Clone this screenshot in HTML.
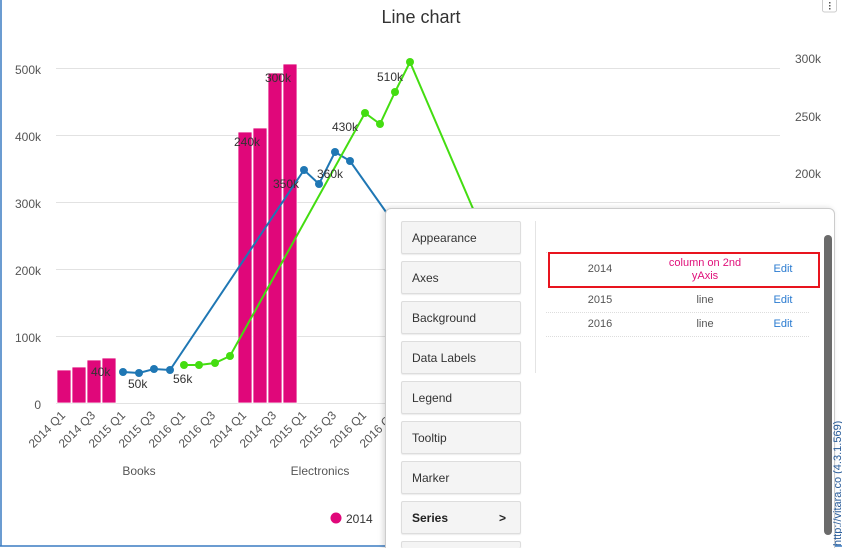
<!DOCTYPE html>
<html style="width:842px;height:548px;overflow:hidden"><head><meta charset="utf-8"><style>
body{margin:0;width:842px;height:548px;overflow:hidden;background:#fff;font-family:"Liberation Sans",sans-serif;position:relative}
.btn{position:absolute;left:401px;width:120px;height:33px;background:#f4f4f4;border:1px solid #ddd;border-radius:2px;box-shadow:0 1px 1px rgba(0,0,0,.08);font-size:12px;color:#333;line-height:33px;padding-left:10px;box-sizing:border-box}
.t{position:absolute;font-size:11px;color:#555;text-align:center}
</style></head><body>
<svg width="842" height="548" style="position:absolute;left:0;top:0" font-family="Liberation Sans,sans-serif">
<line x1="1" y1="0" x2="1" y2="546" stroke="#3a7cc2" stroke-width="1.5"/>
<line x1="0" y1="546" x2="842" y2="546" stroke="#3a7cc2" stroke-width="1.5"/>
<text x="421" y="23" font-size="18" fill="#333" text-anchor="middle">Line chart</text>
<g stroke="#e2e2e2" stroke-width="1">
<line x1="56" y1="68.5" x2="780" y2="68.5"/><line x1="56" y1="135.5" x2="780" y2="135.5"/><line x1="56" y1="202.5" x2="780" y2="202.5"/><line x1="56" y1="269.5" x2="780" y2="269.5"/><line x1="56" y1="336.5" x2="780" y2="336.5"/><line x1="56" y1="403.5" x2="780" y2="403.5"/>
</g>
<g font-size="12" fill="#555" text-anchor="end">
<text x="41" y="74">500k</text><text x="41" y="141">400k</text><text x="41" y="208">300k</text><text x="41" y="275">200k</text><text x="41" y="342">100k</text><text x="41" y="409">0</text>
</g>
<g font-size="12" fill="#555"><text x="795" y="63">300k</text><text x="795" y="121">250k</text><text x="795" y="178">200k</text></g>
<g fill="#e0077a" stroke="#fff" stroke-width="0.8">
<rect x="57" y="370" width="14" height="33"/><rect x="72" y="367" width="14" height="36"/><rect x="87" y="360" width="14" height="43"/><rect x="102" y="358" width="14" height="45"/>
<rect x="238" y="132" width="14" height="271"/><rect x="253" y="128" width="14" height="275"/><rect x="268" y="73" width="14" height="330"/><rect x="283" y="64" width="14" height="339"/>
</g>
<g fill="none" stroke-width="2">
<polyline stroke="#1f77b4" points="123,372 139,373 154,369 170,370 304,170 319,184 335,152 350,161 420,260"/>
<polyline stroke="#44dd11" points="184,365 199,365 215,363 230,356 365,113 380,124 395,92 410,62 480,225"/>
</g>
<g fill="#1f77b4"><circle cx="123" cy="372" r="4"/><circle cx="139" cy="373" r="4"/><circle cx="154" cy="369" r="4"/><circle cx="170" cy="370" r="4"/><circle cx="304" cy="170" r="4"/><circle cx="319" cy="184" r="4"/><circle cx="335" cy="152" r="4"/><circle cx="350" cy="161" r="4"/></g>
<g fill="#44dd11"><circle cx="184" cy="365" r="4"/><circle cx="199" cy="365" r="4"/><circle cx="215" cy="363" r="4"/><circle cx="230" cy="356" r="4"/><circle cx="365" cy="113" r="4"/><circle cx="380" cy="124" r="4"/><circle cx="395" cy="92" r="4"/><circle cx="410" cy="62" r="4"/></g>
<g font-size="12" fill="#333">
<text x="91" y="376">40k</text><text x="128" y="388">50k</text><text x="173" y="383">56k</text><text x="234" y="146">240k</text><text x="265" y="82">300k</text><text x="273" y="188">350k</text><text x="317" y="178">360k</text><text x="332" y="131">430k</text><text x="377" y="81">510k</text>
</g>
<g font-size="12" fill="#555" text-anchor="end">
<text transform="translate(66,416) rotate(-45)">2014 Q1</text>
<text transform="translate(96,416) rotate(-45)">2014 Q3</text>
<text transform="translate(126,416) rotate(-45)">2015 Q1</text>
<text transform="translate(156,416) rotate(-45)">2015 Q3</text>
<text transform="translate(186,416) rotate(-45)">2016 Q1</text>
<text transform="translate(216,416) rotate(-45)">2016 Q3</text>
<text transform="translate(247,416) rotate(-45)">2014 Q1</text>
<text transform="translate(277,416) rotate(-45)">2014 Q3</text>
<text transform="translate(307,416) rotate(-45)">2015 Q1</text>
<text transform="translate(337,416) rotate(-45)">2015 Q3</text>
<text transform="translate(367,416) rotate(-45)">2016 Q1</text>
<text transform="translate(397,416) rotate(-45)">2016 Q3</text>
</g>
<text x="139" y="475" font-size="12" fill="#555" text-anchor="middle">Books</text>
<text x="320" y="475" font-size="12" fill="#555" text-anchor="middle">Electronics</text>
<circle cx="336" cy="518" r="5.5" fill="#e0077a"/>
<text x="346" y="523" font-size="12" fill="#333">2014</text>
<rect x="822.5" y="-3" width="14" height="15" rx="2" fill="#fff" stroke="#ccc"/>
<g fill="#555"><rect x="829" y="2" width="1.5" height="1.5"/><rect x="829" y="5" width="1.5" height="1.5"/><rect x="829" y="8" width="1.5" height="1.5"/></g>
</svg>
<div style="position:absolute;left:385px;top:208px;width:448px;height:345px;background:#fff;border:1px solid #ccc;border-radius:6px 6px 0 0;box-shadow:-2px 0 6px rgba(0,0,0,.15)"></div>
<div class="btn" style="top:221px">Appearance</div>
<div class="btn" style="top:261px">Axes</div>
<div class="btn" style="top:301px">Background</div>
<div class="btn" style="top:341px">Data Labels</div>
<div class="btn" style="top:381px">Legend</div>
<div class="btn" style="top:421px">Tooltip</div>
<div class="btn" style="top:461px">Marker</div>
<div class="btn" style="top:501px;font-weight:bold;color:#222">Series<span style="position:absolute;right:14px">&gt;</span></div>
<div class="btn" style="top:541px;height:7px;border-bottom:none"></div>
<div style="position:absolute;left:535px;top:221px;width:1px;height:152px;background:#e4e4e4"></div>
<div style="position:absolute;left:546px;top:252px;width:263px;border-top:1px dotted #ddd"></div>
<div style="position:absolute;left:548px;top:252px;width:268px;height:32px;border:2px solid #e8141e"></div>
<div class="t" style="left:580px;top:263px;width:40px">2014</div>
<div class="t" style="left:655px;top:257px;width:100px;color:#e0107a;line-height:13px">column on 2nd<br>yAxis</div>
<div class="t" style="left:763px;top:263px;width:40px;color:#2a7bd0">Edit</div>
<div class="t" style="left:580px;top:294px;width:40px">2015</div>
<div class="t" style="left:685px;top:294px;width:40px">line</div>
<div class="t" style="left:763px;top:294px;width:40px;color:#2a7bd0">Edit</div>
<div style="position:absolute;left:546px;top:312px;width:263px;border-top:1px dotted #ddd"></div>
<div class="t" style="left:580px;top:318px;width:40px">2016</div>
<div class="t" style="left:685px;top:318px;width:40px">line</div>
<div class="t" style="left:763px;top:318px;width:40px;color:#2a7bd0">Edit</div>
<div style="position:absolute;left:546px;top:336px;width:263px;border-top:1px dotted #ddd"></div>
<div style="position:absolute;left:824px;top:235px;width:8px;height:300px;background:#6b6b6b;border-radius:4px"></div>
<div style="position:absolute;left:833px;top:546px;transform-origin:0 0;transform:rotate(-90deg);font-size:11px;color:#2a5d9a;white-space:nowrap;line-height:10px">http://vitara.co (4.3.1.569)</div>
</body></html>
